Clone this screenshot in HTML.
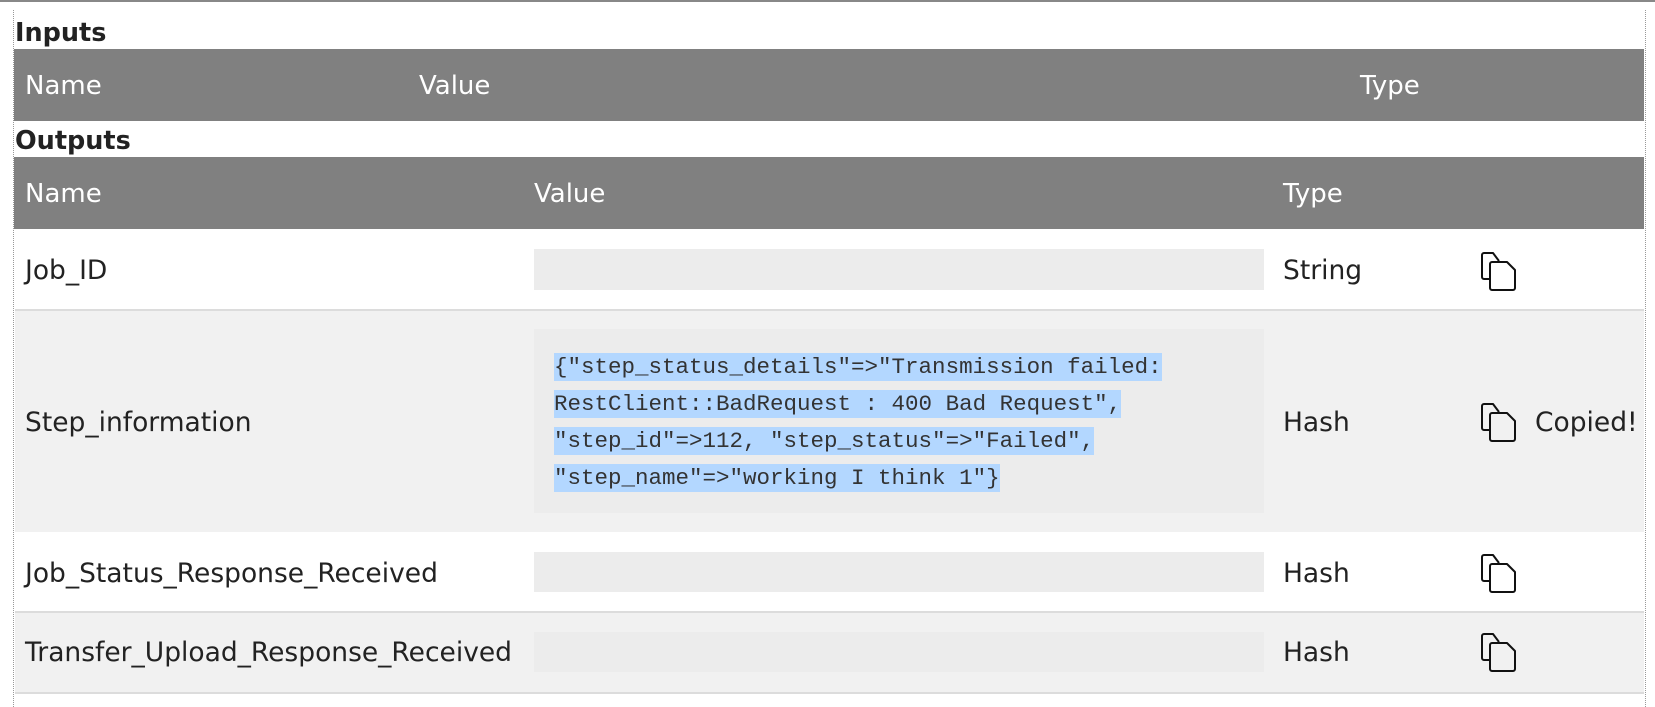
<!DOCTYPE html>
<html><head><meta charset="utf-8"><style>
body{margin:0;width:1655px;height:707px;background:#fff;position:relative;overflow:hidden;font-family:"DejaVu Sans","Liberation Sans",sans-serif;color:#222}
.a{position:absolute}
.band{position:absolute;left:14px;width:1630px;background:#808080}
.ht{position:absolute;color:#fff;font-size:26px;line-height:30px}
.h{position:absolute;left:15px;font-weight:bold;font-size:25.5px;line-height:30px;color:#222}
.row{position:absolute;left:15px;width:1629px;border-bottom:2px solid #dcdcdc}
.t{position:absolute;font-size:26.5px;color:#222;transform:translateY(-50%);line-height:30px}
.box{position:absolute;left:534px;width:730px;background:#ececec}
.code{position:absolute;left:554px;font-family:"Liberation Mono",monospace;font-size:22.5px;line-height:26px;color:#333}
.code span{background:#b3d7ff;padding:1px 0}
svg{position:absolute}
</style></head><body>
<div class="a" style="left:0;top:0;width:1655px;height:2px;background:#888"></div>
<div class="a" style="left:13px;top:10px;width:0;height:697px;border-left:1px dotted #999"></div>
<div class="a" style="left:1645px;top:10px;width:0;height:697px;border-left:1px dotted #999"></div>
<div class="h" style="top:18px">Inputs</div>
<div class="band" style="top:49px;height:72px"></div>
<div class="ht" style="left:25px;top:71px">Name</div>
<div class="ht" style="left:419px;top:71px">Value</div>
<div class="ht" style="left:1360px;top:71px">Type</div>
<div class="h" style="top:126px">Outputs</div>
<div class="band" style="top:157px;height:72px"></div>
<div class="ht" style="left:25px;top:179px">Name</div>
<div class="ht" style="left:534px;top:179px">Value</div>
<div class="ht" style="left:1283px;top:179px">Type</div>

<div class="row" style="top:229px;height:80px;background:#fff"></div>
<div class="box" style="top:249px;height:41px"></div>
<div class="t" style="left:25px;top:271px">Job_ID</div>
<div class="t" style="left:1283px;top:271px">String</div>

<div class="row" style="top:311px;height:221px;background:#f1f1f1"></div>
<div class="box" style="top:329px;height:184px"></div>
<div class="code" style="top:354px"><span>{"step_status_details"=&gt;"Transmission failed: </span></div>
<div class="code" style="top:391px"><span>RestClient::BadRequest : 400 Bad Request", </span></div>
<div class="code" style="top:428px"><span>"step_id"=&gt;112, "step_status"=&gt;"Failed", </span></div>
<div class="code" style="top:465px"><span>"step_name"=&gt;"working I think 1"}</span></div>
<div class="t" style="left:25px;top:423px">Step_information</div>
<div class="t" style="left:1283px;top:423px">Hash</div>
<div class="t" style="left:1535px;top:423px">Copied!</div>

<div class="row" style="top:532px;height:79px;background:#fff"></div>
<div class="box" style="top:552px;height:40px"></div>
<div class="t" style="left:25px;top:574px">Job_Status_Response_Received</div>
<div class="t" style="left:1283px;top:574px">Hash</div>

<div class="row" style="top:613px;height:79px;background:#f1f1f1"></div>
<div class="box" style="top:632px;height:40px"></div>
<div class="t" style="left:25px;top:653px">Transfer_Upload_Response_Received</div>
<div class="t" style="left:1283px;top:653px">Hash</div>

<svg width="0" height="0"><defs><g id="ic" fill="none" stroke="#111" stroke-width="2" stroke-linejoin="round"><path d="M10,27 H4 a2,2 0 0 1 -2,-2 V3 a2,2 0 0 1 2,-2 H13 L19,9"/><path d="M10,12 a2,2 0 0 1 2,-2 H27 L35,18 V36 a2,2 0 0 1 -2,2 H12 a2,2 0 0 1 -2,-2 Z"/></g></defs></svg>
<svg style="left:1480px;top:252px" width="38" height="40"><use href="#ic"/></svg>
<svg style="left:1480px;top:403px" width="38" height="40"><use href="#ic"/></svg>
<svg style="left:1480px;top:554px" width="38" height="40"><use href="#ic"/></svg>
<svg style="left:1480px;top:633px" width="38" height="40"><use href="#ic"/></svg>
</body></html>
